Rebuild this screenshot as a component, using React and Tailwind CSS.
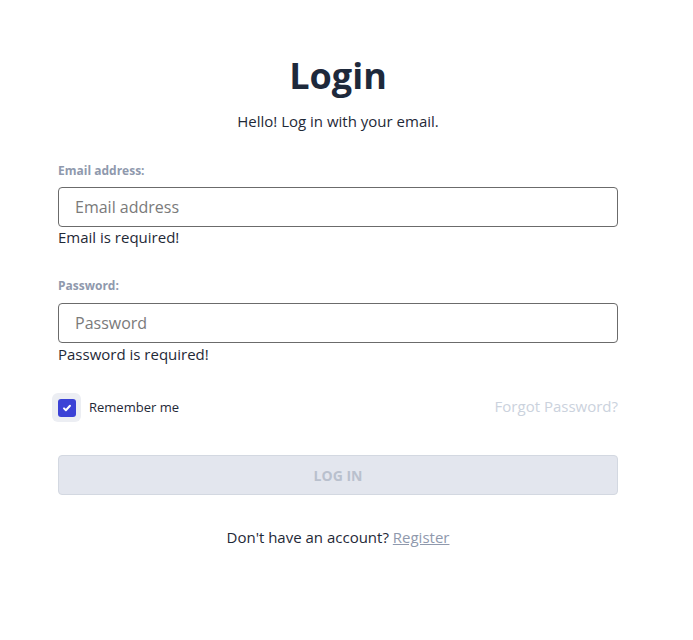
import React from "react";

export default function App() {
  return (
    <div className="min-h-[640px] bg-white font-['Open_Sans',sans-serif]">
      <div className="ml-[58px] w-[560px] pt-[52px]">
        <h1 className="text-center text-[36px] font-bold leading-[48px] text-[#1e293b]">Login</h1>
        <p className="mt-[10px] text-center text-[15px] leading-[22px] text-[#1f2937]">Hello! Log in with your email.</p>

        <div className="mt-[30px]">
          <label className="block text-[12px] font-bold leading-[18px] text-[#8f99ad]">Email address:</label>
          <input
            className="mt-[7px] block h-[40px] w-full rounded-[4px] border border-[#6b6b6b] px-[16px] text-[16px] text-[#1f2937] outline-none placeholder:text-[#7a7a7a]"
            placeholder="Email address"
          />
          <p className="-mt-px text-[15px] leading-[22px] text-[#1f2937]">Email is required!</p>
        </div>

        <div className="mt-[29px]">
          <label className="block text-[12px] font-bold leading-[18px] text-[#8f99ad]">Password:</label>
          <input
            type="password"
            className="mt-[8px] block h-[40px] w-full rounded-[4px] border border-[#6b6b6b] px-[16px] text-[16px] text-[#1f2937] outline-none placeholder:text-[#7a7a7a]"
            placeholder="Password"
          />
          <p className="text-[15px] leading-[22px] text-[#1f2937]">Password is required!</p>
        </div>

        <div className="mt-[28px] flex items-center justify-between">
          <label className="flex items-center">
            <span className="-ml-[6px] flex h-[29px] w-[29px] items-center justify-center rounded-[6px] bg-[#eceef3]">
              <span className="flex h-[18px] w-[18px] items-center justify-center rounded-[3px] bg-[#3b42d6]">
                <svg viewBox="0 0 16 16" className="h-[12px] w-[12px]" fill="none" stroke="white" strokeWidth="2.6" strokeLinecap="round" strokeLinejoin="round">
                  <path d="M4 8.5l2.5 2.5 5.5-6" />
                </svg>
              </span>
            </span>
            <span className="ml-[8px] text-[13px] font-medium text-[#1f2937]">Remember me</span>
          </label>
          <a className="-mt-[2px] text-[15px] text-[#cbd2dd]">Forgot Password?</a>
        </div>

        <button className="mt-[33px] flex h-[40px] w-full items-center justify-center rounded-[4px] border border-[#d3d8e1] bg-[#e3e6ee] text-[14px] font-bold text-[#b9c0cd]">
          LOG IN
        </button>

        <p className="mt-[31px] text-center text-[15px] leading-[22px] text-[#1f2937]">
          Don't have an account? <a className="text-[#8f99ad] underline">Register</a>
        </p>
      </div>
    </div>
  );
}
